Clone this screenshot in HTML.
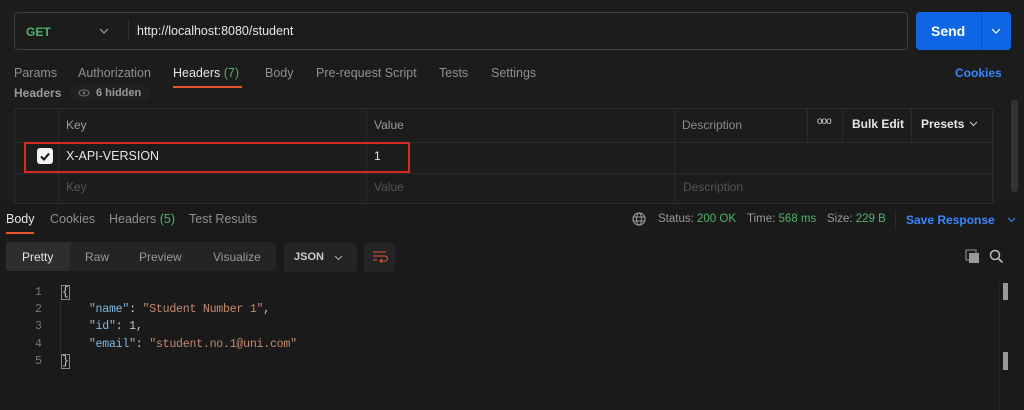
<!DOCTYPE html>
<html><head><meta charset="utf-8"><style>
*{box-sizing:border-box;margin:0;padding:0}
body{width:1024px;height:410px;background:#1c1c1c;font-family:"Liberation Sans",sans-serif;font-size:12px;color:#a6a6a6;position:relative;overflow:hidden}
.a{position:absolute;white-space:nowrap}
.url{left:14px;top:12px;width:894px;height:38px;border:1px solid #3d3d3d;border-radius:4px;background:#1c1c1c}
.send{left:916px;top:12px;width:95px;height:38px;background:#0e66e5;border-radius:4px}
.tab{top:66px;font-size:12.5px;color:#8f8f8f}
.tbl{left:14px;top:108px;width:979px;height:96px;border:1px solid #2a2a2a}
.hl{position:absolute;left:0;width:100%;height:1px;background:#2a2a2a}
.vl{position:absolute;top:0;width:1px;height:100%;background:#2a2a2a}
.mono{font-family:"Liberation Mono",monospace;font-size:11.6px}
</style></head><body>
<div class="a url"></div>
<div class="a" style="left:26px;top:25px;color:#4fb36a;font-weight:bold;font-size:12px">GET</div>
<svg class="a" style="left:99px;top:27px" width="10" height="8"><path d="M1 2l4 4 4-4" stroke="#999" fill="none" stroke-width="1.2"/></svg>
<div class="a" style="left:128px;top:21px;width:1px;height:20px;background:#333"></div>
<div class="a" style="left:137px;top:24px;color:#e6e6e6;font-size:12.5px">http://localhost:8080/student</div>
<div class="a send"></div>
<div class="a" style="left:981px;top:12px;width:1px;height:38px;background:#0a55c4"></div>
<div class="a" style="left:931px;top:23px;color:#fff;font-weight:bold;font-size:14px">Send</div>
<svg class="a" style="left:991px;top:28px" width="10" height="7"><path d="M1 1l4 4 4-4" stroke="#fff" fill="none" stroke-width="1.2"/></svg>

<div class="a tab" style="left:14px">Params</div>
<div class="a tab" style="left:78px">Authorization</div>
<div class="a tab" style="left:173px;color:#e6e6e6">Headers <span style="color:#4fb36a">(7)</span></div>
<div class="a" style="left:173px;top:86px;width:69px;height:2px;background:#e8532b"></div>
<div class="a tab" style="left:265px">Body</div>
<div class="a tab" style="left:316px">Pre-request Script</div>
<div class="a tab" style="left:439px">Tests</div>
<div class="a tab" style="left:491px">Settings</div>
<div class="a tab" style="left:955px;color:#3a86ff;font-weight:bold;font-size:12px">Cookies</div>
<div class="a" style="left:14px;top:86px;font-weight:bold;color:#9a9a9a;font-size:12px">Headers</div>
<div class="a" style="left:70px;top:84px;width:80px;height:18px;border-radius:9px;background:#202020"></div>
<svg class="a" style="left:78px;top:89px" width="12" height="8"><ellipse cx="6" cy="4" rx="5" ry="3" stroke="#777" fill="none"/><circle cx="6" cy="4" r="1.3" fill="#777"/></svg>
<div class="a" style="left:96px;top:87px;font-weight:bold;color:#9a9a9a;font-size:11px">6 hidden</div>

<div class="a tbl">
<div class="hl" style="top:33px"></div><div class="hl" style="top:64px"></div>
<div class="vl" style="left:43px"></div><div class="vl" style="left:351px"></div><div class="vl" style="left:659px"></div>
<div class="vl" style="left:792px;height:33px"></div><div class="vl" style="left:827px;height:33px"></div><div class="vl" style="left:896px;height:33px"></div>
</div>
<div class="a" style="left:66px;top:118px;color:#9a9a9a">Key</div>
<div class="a" style="left:374px;top:118px;color:#9a9a9a">Value</div>
<div class="a" style="left:682px;top:118px;color:#8a8a8a">Description</div>
<div class="a" style="left:817px;top:116px;color:#ccc;font-size:10px;letter-spacing:-1px">ooo</div>
<div class="a" style="left:852px;top:117px;color:#e6e6e6;font-weight:bold">Bulk Edit</div>
<div class="a" style="left:921px;top:117px;color:#e6e6e6;font-weight:bold">Presets</div>
<svg class="a" style="left:969px;top:121px" width="9" height="6"><path d="M1 1l3.5 3.5L8 1" stroke="#ccc" fill="none"/></svg>
<div class="a" style="left:24px;top:142px;width:386px;height:31px;border:2px solid #d9281f"></div>
<div class="a" style="left:37px;top:148px;width:16px;height:16px;background:#f2f2f2;border-radius:3px"></div>
<svg class="a" style="left:37px;top:148px" width="16" height="16"><path d="M4 8.5l3 3 5-6" stroke="#111" stroke-width="2" fill="none"/></svg>
<div class="a" style="left:66px;top:149px;color:#e6e6e6;font-size:12.5px">X-API-VERSION</div>
<div class="a" style="left:374px;top:149px;color:#e6e6e6">1</div>
<div class="a" style="left:66px;top:180px;color:#555">Key</div>
<div class="a" style="left:374px;top:180px;color:#555">Value</div>
<div class="a" style="left:683px;top:180px;color:#555">Description</div>
<div class="a" style="left:1011px;top:100px;width:7px;height:92px;background:#333;border-radius:3px"></div>

<div class="a" style="left:0;top:205px;width:1024px;height:205px;background:#1a1a1a"></div>
<div class="a tab" style="left:6px;top:212px;color:#e6e6e6">Body</div>
<div class="a" style="left:6px;top:232px;width:28px;height:2px;background:#e8532b"></div>
<div class="a tab" style="left:50px;top:212px">Cookies</div>
<div class="a tab" style="left:109px;top:212px">Headers <span style="color:#4fb36a">(5)</span></div>
<div class="a tab" style="left:189px;top:212px">Test Results</div>
<svg class="a" style="left:632px;top:212px" width="14" height="14"><circle cx="7" cy="7" r="6" stroke="#999" fill="none" stroke-width="1.2"/><ellipse cx="7" cy="7" rx="2.5" ry="6" stroke="#999" fill="none"/><path d="M1 5h12M1 9h12" stroke="#999"/></svg>
<div class="a" style="left:658px;top:213px;font-size:11.5px;color:#999">Status: <span style="color:#4fb36a">200 OK</span></div>
<div class="a" style="left:747px;top:213px;font-size:11.5px;color:#999">Time: <span style="color:#4fb36a">568 ms</span></div>
<div class="a" style="left:827px;top:213px;font-size:11.5px;color:#999">Size: <span style="color:#4fb36a">229 B</span></div>
<div class="a" style="left:895px;top:210px;width:1px;height:20px;background:#2c2c2c"></div>
<div class="a" style="left:906px;top:213px;color:#3a86ff;font-weight:bold;font-size:12px">Save Response</div>
<svg class="a" style="left:1007px;top:217px" width="9" height="6"><path d="M1 1l3.5 3.5L8 1" stroke="#3a86ff" fill="none"/></svg>

<div class="a" style="left:6px;top:242px;width:270px;height:29px;background:#242424;border-radius:3px"></div>
<div class="a" style="left:6px;top:242px;width:64px;height:29px;background:#2e2e2e;border-radius:3px 0 0 3px"></div>
<div class="a" style="left:22px;top:250px;color:#e6e6e6;font-size:12px">Pretty</div>
<div class="a" style="left:85px;top:250px;color:#999">Raw</div>
<div class="a" style="left:139px;top:250px;color:#999">Preview</div>
<div class="a" style="left:213px;top:250px;color:#999">Visualize</div>
<div class="a" style="left:284px;top:243px;width:73px;height:29px;background:#242424;border-radius:3px"></div>
<div class="a" style="left:294px;top:251px;color:#ccc;font-weight:bold;font-size:11px">JSON</div>
<svg class="a" style="left:334px;top:255px" width="9" height="6"><path d="M1 1l3.5 3.5L8 1" stroke="#aaa" fill="none"/></svg>
<div class="a" style="left:364px;top:243px;width:31px;height:29px;background:#242424;border-radius:3px"></div>
<svg class="a" style="left:372px;top:250px" width="16" height="14"><path d="M1 2h13M1 6h12a2.5 2.5 0 0 1 0 5H8M10 9l-2 2 2 2M1 10h4" stroke="#e8532b" fill="none" stroke-width="1.1"/></svg>
<svg class="a" style="left:965px;top:249px" width="16" height="15"><rect x="1" y="1" width="10" height="10" stroke="#999" fill="none"/><rect x="4" y="4" width="10" height="10" fill="#999"/></svg>
<svg class="a" style="left:989px;top:249px" width="15" height="15"><circle cx="6" cy="6" r="4.5" stroke="#bbb" fill="none" stroke-width="1.5"/><path d="M9.5 9.5l4 4" stroke="#bbb" stroke-width="1.6"/></svg>

<div class="mono a" style="left:0;top:284px;line-height:17.2px;color:#777;width:42px;text-align:right">1<br>2<br>3<br>4<br>5</div>
<div class="a" style="left:60px;top:301px;width:1px;height:52px;background:#2c2c2c"></div>
<div class="mono a" style="left:62px;top:284px;line-height:17.2px;color:#ccc;white-space:pre;letter-spacing:-0.25px"><span style="outline:1px solid #888">{</span>
    <span style="color:#7fb8e0">"name"</span>: <span style="color:#c48a6e">"Student Number 1"</span>,
    <span style="color:#7fb8e0">"id"</span>: <span style="color:#b5cea8">1</span>,
    <span style="color:#7fb8e0">"email"</span>: <span style="color:#c48a6e">"student.no.1@uni.com"</span>
<span style="outline:1px solid #888">}</span></div>
<div class="a" style="left:1003px;top:283px;width:5px;height:17px;background:#999"></div>
<div class="a" style="left:1003px;top:352px;width:5px;height:18px;background:#999"></div>
<div class="a" style="left:999px;top:283px;width:1px;height:127px;background:#262626"></div>
</body></html>
